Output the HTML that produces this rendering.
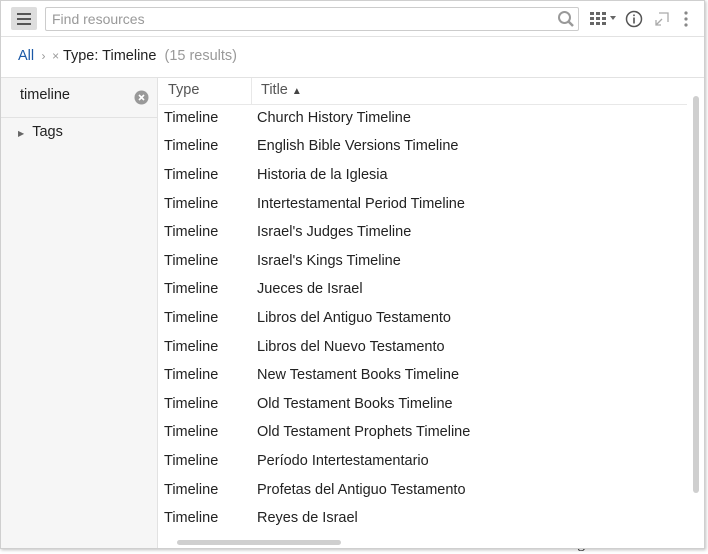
<!DOCTYPE html>
<html><head><style>
*{box-sizing:border-box;margin:0;padding:0}
body{width:708px;height:554px;overflow:hidden;background:#fff;font-family:"Liberation Sans",sans-serif;position:relative;color:#222}
.bg{position:absolute;font-family:"Liberation Serif",serif;font-size:15px;color:#222;white-space:nowrap}
.pop{position:absolute;left:0;top:0;width:705px;height:549px;background:#fff;border:1px solid #cfcfcf;box-shadow:1px 1px 3px rgba(0,0,0,.25);overflow:hidden}
.tb{position:absolute;left:0;top:0;width:100%;height:36px;border-bottom:1px solid #e2e2e2}
.menu{position:absolute;left:10px;top:6px;width:26px;height:23px;background:#ddd;border-radius:2px}
.menu i{position:absolute;left:6px;width:14px;height:2px;background:#555}
.search{position:absolute;left:44px;top:6px;width:534px;height:24px;border:1px solid #ccc;border-radius:2px;font-size:14px;color:#999;padding:3px 6px}
.bc{position:absolute;left:17px;top:47px;font-size:14.5px}
.main{position:absolute;left:0;top:76px;width:100%;bottom:0;border-top:1px solid #e2e2e2}
.left{position:absolute;left:0;top:0;width:157px;bottom:0;background:#f6f6f6;border-right:1px solid #e2e2e2}
.row{position:absolute;left:163px;font-size:14.5px;color:#222}
.row span{position:absolute;left:93px;white-space:nowrap}
</style></head><body>
<div class="bg" style="left:544px;top:536px;letter-spacing:1.5px">brought it to the hous</div>
<div class="pop">
 <div class="tb">
  <div class="menu"><i style="top:6px"></i><i style="top:11px"></i><i style="top:16px"></i></div>
  <div class="search">Find resources</div>
  <svg style="position:absolute;left:556px;top:9px" width="18" height="18"><circle cx="7.5" cy="7.5" r="5.5" fill="none" stroke="#999" stroke-width="2"/><line x1="11.5" y1="11.5" x2="16" y2="16" stroke="#999" stroke-width="2.5"/></svg>
  <svg style="position:absolute;left:589px;top:10px" width="30" height="16" fill="#666"><rect x="0" y="1" width="4" height="3"/><rect x="6" y="1" width="4" height="3"/><rect x="12" y="1" width="4" height="3"/><rect x="0" y="6" width="4" height="3"/><rect x="6" y="6" width="4" height="3"/><rect x="12" y="6" width="4" height="3"/><rect x="0" y="11" width="4" height="3"/><rect x="6" y="11" width="4" height="3"/><rect x="12" y="11" width="4" height="3"/><path d="M20 5h6l-3 4z"/></svg>
  <svg style="position:absolute;left:624px;top:9px" width="18" height="18"><circle cx="9" cy="9" r="7.5" fill="none" stroke="#555" stroke-width="1.5"/><rect x="8.2" y="7.5" width="1.6" height="6" fill="#555"/><rect x="8.2" y="4.5" width="1.6" height="1.6" fill="#555"/></svg>
  <svg style="position:absolute;left:653px;top:10px" width="16" height="16" fill="none" stroke="#aaa" stroke-width="1.3"><path d="M5 2h9v9"/><path d="M2 14l6-6M2 9v5h5"/></svg>
  <svg style="position:absolute;left:682px;top:9px" width="6" height="18" fill="#888"><circle cx="3" cy="3" r="1.6"/><circle cx="3" cy="9" r="1.6"/><circle cx="3" cy="15" r="1.6"/></svg>
 </div>
 <div class="bc"><span style="color:#1a58a6">All</span> <span style="color:#999;font-size:12px">&nbsp;›&nbsp; ×</span> Type: Timeline &nbsp;<span style="color:#999">(15 results)</span></div>
 <div class="main">
  <div class="left">
   <div style="height:40px;border-bottom:1px solid #e2e2e2;font-size:14.5px;padding:9px 0 0 19px">timeline
    <svg style="position:absolute;left:133px;top:12px" width="15" height="15"><circle cx="7.5" cy="7.5" r="7" fill="#999"/><path d="M5 5l5 5M10 5l-5 5" stroke="#fff" stroke-width="1.6"/></svg></div>
   <div style="font-size:14.5px;padding:6px 0 0 17px"><span style="font-size:8px;color:#666">▶</span>&nbsp;&nbsp;Tags</div>
  </div>
  <div style="position:absolute;left:158px;top:0;width:528px;height:27px;border-bottom:1px solid #e8e8e8;font-size:14.5px;color:#555">
   <span style="position:absolute;left:9px;top:4px">Type</span>
   <div style="position:absolute;left:92px;top:0;height:26px;border-left:1px solid #e8e8e8"></div>
   <span style="position:absolute;left:102px;top:4px">Title <span style="font-size:10px;color:#444">▲</span></span>
  </div>
  <div class="row" style="top:32px">Timeline<span>Church History Timeline</span></div>
  <div class="row" style="top:60px">Timeline<span>English Bible Versions Timeline</span></div>
  <div class="row" style="top:89px">Timeline<span>Historia de la Iglesia</span></div>
  <div class="row" style="top:118px">Timeline<span>Intertestamental Period Timeline</span></div>
  <div class="row" style="top:146px">Timeline<span>Israel's Judges Timeline</span></div>
  <div class="row" style="top:175px">Timeline<span>Israel's Kings Timeline</span></div>
  <div class="row" style="top:203px">Timeline<span>Jueces de Israel</span></div>
  <div class="row" style="top:232px">Timeline<span>Libros del Antiguo Testamento</span></div>
  <div class="row" style="top:261px">Timeline<span>Libros del Nuevo Testamento</span></div>
  <div class="row" style="top:289px">Timeline<span>New Testament Books Timeline</span></div>
  <div class="row" style="top:318px">Timeline<span>Old Testament Books Timeline</span></div>
  <div class="row" style="top:346px">Timeline<span>Old Testament Prophets Timeline</span></div>
  <div class="row" style="top:375px">Timeline<span>Período Intertestamentario</span></div>
  <div class="row" style="top:404px">Timeline<span>Profetas del Antiguo Testamento</span></div>
  <div class="row" style="top:432px">Timeline<span>Reyes de Israel</span></div>
  <div style="position:absolute;left:692px;top:18px;width:6px;height:397px;background:#cfcfcf;border-radius:3px"></div>
  <div style="position:absolute;left:176px;top:462px;width:164px;height:5px;background:#cfcfcf;border-radius:3px"></div>
 </div>
</div>
</body></html>
